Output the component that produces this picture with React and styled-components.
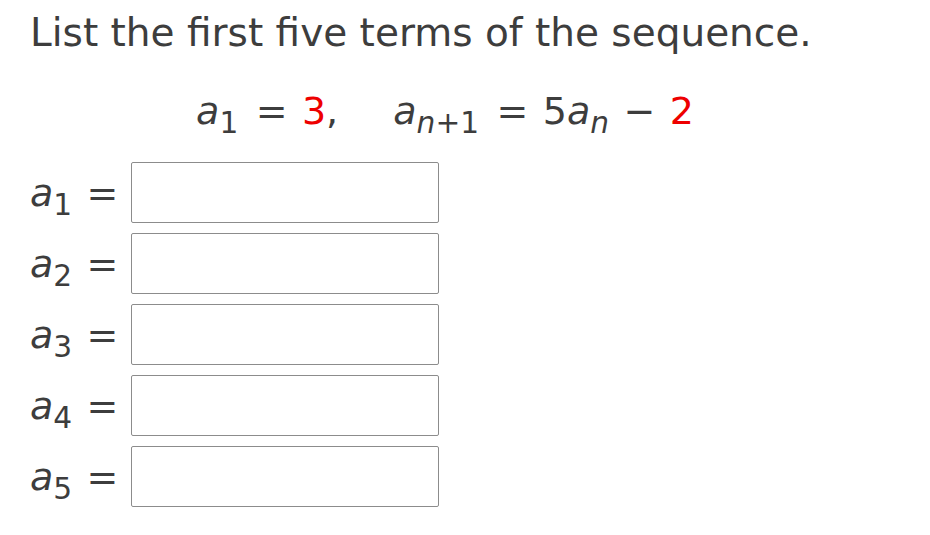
import React from "react";
import styled, { createGlobalStyle } from "styled-components";

const Global = createGlobalStyle`
  html, body { margin: 0; padding: 0; background: #ffffff; }
  body {
    font-family: "DejaVu Sans", Verdana, sans-serif;
    color: #3d3d3d;
  }
`;

const Page = styled.div`
  padding: 10px 0 0 30px;
  width: 900px;
`;

const Title = styled.h1`
  margin: 0;
  font-size: 39px;
  font-weight: normal;
  line-height: 46px;
`;

const Formula = styled.div`
  width: 830px;
  margin-top: 32px;
  text-align: center;
  font-size: 38px;
  line-height: 46px;
  white-space: nowrap;
`;

const Var = styled.i`
  font-style: italic;
`;

const Sub = styled.sub`
  font-size: 0.78em;
  line-height: 0;
  vertical-align: -0.3em;
  margin-right: ${(p) => (p.$tight ? "0" : "0.1em")};
  font-style: ${(p) => (p.$italic ? "italic" : "normal")};
`;

const Upright = styled.span`
  font-style: normal;
`;

const Op = styled.span`
  margin: 0 0.38em;
`;

const Red = styled.span`
  color: #ee0000;
`;

const Gap = styled.span`
  display: inline-block;
  width: 1.45em;
`;

const Answers = styled.div`
  margin-top: 28px;
  display: flex;
  flex-direction: column;
  gap: 10px;
`;

const Row = styled.div`
  display: flex;
  align-items: center;
  height: 61px;
`;

const Label = styled.label`
  width: 101px;
  font-size: 38px;
  line-height: 46px;
  white-space: nowrap;
`;

const Eq = styled.span`
  margin-left: 0.38em;
`;

const Box = styled.input`
  box-sizing: border-box;
  width: 308px;
  height: 61px;
  margin: 0;
  border: 1px solid #8c8c8c;
  border-radius: 2px;
  background: #ffffff;
  font-family: "DejaVu Sans", Verdana, sans-serif;
  font-size: 24px;
  padding: 0 8px;
  outline: none;
`;

export default function App() {
  const terms = [1, 2, 3, 4, 5];
  return (
    <>
      <Global />
      <Page>
        <Title>List the first five terms of the sequence.</Title>
        <Formula>
          <Var>a</Var>
          <Sub>1</Sub>
          <Op>=</Op>
          <Red>3</Red>,<Gap />
          <Var>a</Var>
          <Sub $italic>
            n<Upright>+1</Upright>
          </Sub>
          <Op>=</Op>5<Var>a</Var>
          <Sub $italic $tight>
            n
          </Sub>
          <Op>−</Op>
          <Red>2</Red>
        </Formula>
        <Answers>
          {terms.map((n) => (
            <Row key={n}>
              <Label>
                <Var>a</Var>
                <Sub $tight>{n}</Sub>
                <Eq>=</Eq>
              </Label>
              <Box type="text" aria-label={`a${n}`} />
            </Row>
          ))}
        </Answers>
      </Page>
    </>
  );
}
